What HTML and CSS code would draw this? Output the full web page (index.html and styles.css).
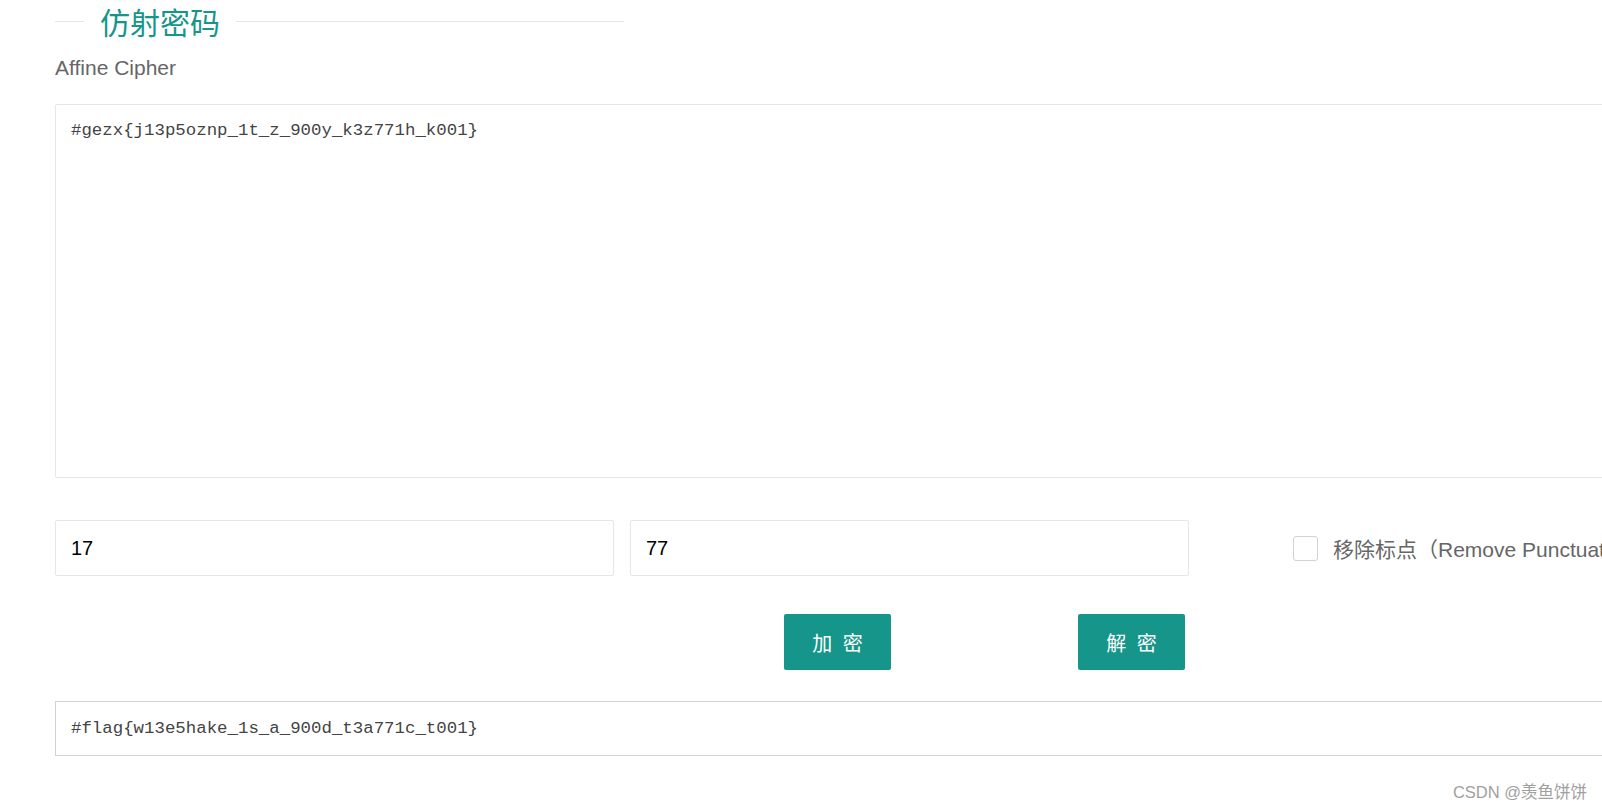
FILE: index.html
```html
<!DOCTYPE html>
<html lang="zh-CN">
<head>
<meta charset="utf-8">
<title>仿射密码</title>
<link rel="stylesheet" href="styles.css">
</head>
<body>
<div class="page">
  <div class="legend">
    <span class="legend-line legend-line-short"></span>
    <h1 class="legend-title">仿射密码</h1>
    <span class="legend-line legend-line-long"></span>
  </div>
  <p class="subtitle">Affine Cipher</p>

  <div class="source">#gezx{j13p5oznp_1t_z_900y_k3z771h_k001}</div>

  <div class="key-row">
    <div class="field">17</div>
    <div class="field">77</div>
    <label class="check">
      <span class="check-box"></span>
      <span class="check-label">移除标点（Remove Punctuation）</span>
    </label>
  </div>

  <div class="btn-row">
    <button class="btn">加 密</button>
    <button class="btn">解 密</button>
  </div>

  <div class="result">#flag{w13e5hake_1s_a_900d_t3a771c_t001}</div>
</div>
<div class="watermark">CSDN @羡鱼饼饼</div>
</body>
</html>
```

FILE: styles.css
```css
html, body {
  margin: 0;
  padding: 0;
  background: #ffffff;
  overflow: hidden;
  width: 1602px;
  height: 810px;
}

body {
  position: relative;
  font-family: "Liberation Sans", "Noto Sans CJK SC", sans-serif;
  color: #333;
}

.page {
  padding-left: 55px;
  width: 1800px;
}

.legend {
  display: flex;
  align-items: center;
  width: 569px;
  height: 42px;
}

.legend-line {
  height: 1px;
  background: #e6e6e6;
}

.legend-line-short {
  width: 29px;
}

.legend-line-long {
  flex: 1;
}

.legend-title {
  margin: 0 16px;
  font-size: 30px;
  line-height: 42px;
  font-weight: normal;
  color: #16968a;
  font-family: "Noto Sans CJK SC", sans-serif;
}

.subtitle {
  margin: 10px 0 0;
  font-size: 21px;
  line-height: 31px;
  color: #666;
}

.source {
  margin-top: 21px;
  box-sizing: border-box;
  width: 1600px;
  height: 374px;
  border: 1px solid #e6e6e6;
  border-radius: 2px;
  padding: 16px 15px;
  font-family: "Liberation Mono", "DejaVu Sans Mono", monospace;
  font-size: 17.4px;
  line-height: 20px;
  color: #444;
}

.key-row {
  margin-top: 42px;
  display: flex;
  align-items: center;
  height: 56px;
}

.field {
  box-sizing: border-box;
  width: 559px;
  height: 56px;
  margin-right: 16px;
  border: 1px solid #e6e6e6;
  border-radius: 2px;
  padding: 0 15px;
  font-size: 20px;
  line-height: 54px;
  color: #000;
}

.check {
  display: flex;
  align-items: center;
  margin-left: 88px;
  white-space: nowrap;
}

.check-box {
  box-sizing: border-box;
  width: 25px;
  height: 25px;
  border: 1px solid #d2d2d2;
  border-radius: 3px;
  margin-right: 15px;
}

.check-label {
  font-size: 21px;
  color: #666;
}

.btn-row {
  margin-top: 38px;
  display: flex;
  padding-left: 729px;
  gap: 187px;
}

.btn {
  width: 107px;
  height: 56px;
  border: none;
  border-radius: 2px;
  background: #16968a;
  color: #fff;
  font-family: "Noto Sans CJK SC", sans-serif;
  font-size: 20px;
  letter-spacing: 3px;
  padding: 0 0 0 3px;
}

.result {
  margin-top: 31px;
  box-sizing: border-box;
  width: 1600px;
  height: 55px;
  border: 1px solid #d2d2d2;
  padding: 1px 15px 0;
  font-family: "Liberation Mono", "DejaVu Sans Mono", monospace;
  font-size: 17.4px;
  line-height: 52px;
  color: #444;
}

.watermark {
  position: absolute;
  right: 15px;
  top: 782px;
  font-size: 16.5px;
  line-height: 20px;
  color: #a0a0a0;
  font-family: "Liberation Sans", "Noto Sans CJK SC", sans-serif;
}
```
